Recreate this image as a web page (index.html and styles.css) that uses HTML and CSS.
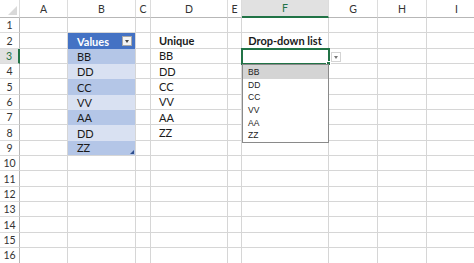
FILE: index.html
```html
<!DOCTYPE html>
<html>
<head>
<meta charset="utf-8">
<link rel="stylesheet" href="styles.css">
</head>
<body>
<div class="sheet">
  <div class="row hdr">
    <div class="c corner"><span class="tri"></span></div>
    <div class="c ch">A</div><div class="c ch">B</div><div class="c ch">C</div><div class="c ch">D</div><div class="c ch">E</div><div class="c ch sel">F</div><div class="c ch">G</div><div class="c ch">H</div><div class="c ch">I</div>
  </div>
  <div class="row"><div class="c rh">1</div><div class="c"></div><div class="c"></div><div class="c"></div><div class="c"></div><div class="c"></div><div class="c"></div><div class="c"></div><div class="c"></div><div class="c"></div></div>
  <div class="row"><div class="c rh">2</div><div class="c"></div><div class="c th">Values<span class="filter"><span class="ftri"></span></span></div><div class="c"></div><div class="c b">Unique</div><div class="c"></div><div class="c b center">Drop-down list</div><div class="c"></div><div class="c"></div><div class="c"></div></div>
  <div class="row"><div class="c rh rsel">3</div><div class="c"></div><div class="c dk">BB</div><div class="c"></div><div class="c">BB</div><div class="c"></div><div class="c active"><span class="handle"></span></div><div class="c"></div><div class="c"></div><div class="c"></div></div>
  <div class="row"><div class="c rh">4</div><div class="c"></div><div class="c lt">DD</div><div class="c"></div><div class="c">DD</div><div class="c"></div><div class="c"></div><div class="c"></div><div class="c"></div><div class="c"></div></div>
  <div class="row"><div class="c rh">5</div><div class="c"></div><div class="c dk">CC</div><div class="c"></div><div class="c">CC</div><div class="c"></div><div class="c"></div><div class="c"></div><div class="c"></div><div class="c"></div></div>
  <div class="row"><div class="c rh">6</div><div class="c"></div><div class="c lt">VV</div><div class="c"></div><div class="c">VV</div><div class="c"></div><div class="c"></div><div class="c"></div><div class="c"></div><div class="c"></div></div>
  <div class="row"><div class="c rh">7</div><div class="c"></div><div class="c dk">AA</div><div class="c"></div><div class="c">AA</div><div class="c"></div><div class="c"></div><div class="c"></div><div class="c"></div><div class="c"></div></div>
  <div class="row"><div class="c rh">8</div><div class="c"></div><div class="c lt">DD</div><div class="c"></div><div class="c">ZZ</div><div class="c"></div><div class="c"></div><div class="c"></div><div class="c"></div><div class="c"></div></div>
  <div class="row"><div class="c rh">9</div><div class="c"></div><div class="c dk last">ZZ<span class="resize"></span></div><div class="c"></div><div class="c"></div><div class="c"></div><div class="c"></div><div class="c"></div><div class="c"></div><div class="c"></div></div>
  <div class="row"><div class="c rh">10</div><div class="c"></div><div class="c"></div><div class="c"></div><div class="c"></div><div class="c"></div><div class="c"></div><div class="c"></div><div class="c"></div><div class="c"></div></div>
  <div class="row"><div class="c rh">11</div><div class="c"></div><div class="c"></div><div class="c"></div><div class="c"></div><div class="c"></div><div class="c"></div><div class="c"></div><div class="c"></div><div class="c"></div></div>
  <div class="row"><div class="c rh">12</div><div class="c"></div><div class="c"></div><div class="c"></div><div class="c"></div><div class="c"></div><div class="c"></div><div class="c"></div><div class="c"></div><div class="c"></div></div>
  <div class="row"><div class="c rh">13</div><div class="c"></div><div class="c"></div><div class="c"></div><div class="c"></div><div class="c"></div><div class="c"></div><div class="c"></div><div class="c"></div><div class="c"></div></div>
  <div class="row"><div class="c rh">14</div><div class="c"></div><div class="c"></div><div class="c"></div><div class="c"></div><div class="c"></div><div class="c"></div><div class="c"></div><div class="c"></div><div class="c"></div></div>
  <div class="row"><div class="c rh">15</div><div class="c"></div><div class="c"></div><div class="c"></div><div class="c"></div><div class="c"></div><div class="c"></div><div class="c"></div><div class="c"></div><div class="c"></div></div>
  <div class="row"><div class="c rh">16</div><div class="c"></div><div class="c"></div><div class="c"></div><div class="c"></div><div class="c"></div><div class="c"></div><div class="c"></div><div class="c"></div><div class="c"></div></div>

  <div class="dd-btn"><span class="dd-tri"></span></div>
  <ul class="dd-list">
    <li class="hl">BB</li>
    <li>DD</li>
    <li>CC</li>
    <li>VV</li>
    <li>AA</li>
    <li>ZZ</li>
  </ul>
</div>
</body>
</html>
```
FILE: styles.css
```css
html, body {
  margin: 0;
  padding: 0;
  background: #ffffff;
  overflow: hidden;
}
.sheet {
  position: relative;
  width: 474px;
  height: 263px;
  overflow: hidden;
  font-family: Lato, "Liberation Sans", sans-serif;
  font-size: 11px;
  color: #1a1a1a;
}
.row {
  display: grid;
  grid-template-columns: 20px 48px 68px 15px 77px 14px 87px 49px 49px 60px;
  height: 15.35px;
}
.row.hdr {
  height: 18px;
}
.c {
  box-sizing: border-box;
  border-right: 1px solid #d6d6d6;
  border-bottom: 1px solid #d6d6d6;
  padding-left: 8px;
  display: flex;
  align-items: center;
  white-space: nowrap;
  position: relative;
}
.hdr .c {
  border-bottom: 1px solid #b7b7b7;
  border-right: 1px solid #dcdcdc;
  justify-content: center;
  padding: 0;
  color: #333333;
  font-size: 10.5px;
  background: #ffffff;
}
.hdr .c.sel {
  background: #e1e1e1;
  border-bottom: 2px solid #217346;
  color: #217346;
}
.corner .tri {
  width: 0;
  height: 0;
  border-left: 9px solid transparent;
  border-bottom: 9px solid #d9d9d9;
  margin-left: 6px;
  margin-top: 4px;
}
.rh {
  justify-content: center;
  padding: 0;
  color: #333333;
  font-size: 10.5px;
  border-right: 1px solid #b7b7b7;
  border-bottom: 1px solid #dcdcdc;
}
.rh.rsel {
  background: #e1e1e1;
  color: #217346;
  border-right: 2px solid #217346;
}
.b {
  font-weight: 700;
}
.center {
  justify-content: center;
  padding-left: 0;
}
.th {
  background: #4472c4;
  color: #ffffff;
  font-weight: 700;
  border-bottom: none;
  padding-left: 9px;
}
.filter {
  position: absolute;
  right: 3px;
  top: 3px;
  width: 10px;
  height: 10px;
  box-sizing: border-box;
  background: #f4f4f4;
  border: 1px solid #a9a9a9;
  display: flex;
  align-items: center;
  justify-content: center;
}
.ftri, .dd-tri {
  width: 0;
  height: 0;
  border-left: 2.5px solid transparent;
  border-right: 2.5px solid transparent;
  border-top: 3px solid #444444;
}
.dk {
  background: #b4c6e7;
  border-bottom: none;
  padding-left: 9px;
}
.lt {
  background: #d9e1f2;
  border-bottom: none;
  padding-left: 9px;
}
.last {
  border-bottom: 1px solid #d6d6d6;
}
.resize {
  position: absolute;
  right: 1px;
  bottom: 1px;
  width: 0;
  height: 0;
  border-left: 4px solid transparent;
  border-bottom: 4px solid #2f4f8f;
}
.active {
  outline: 2px solid #217346;
  outline-offset: -1px;
  z-index: 2;
}
.handle {
  position: absolute;
  right: -3px;
  bottom: -3px;
  width: 5px;
  height: 5px;
  background: #217346;
  border: 1px solid #ffffff;
  box-sizing: border-box;
}
.dd-btn {
  position: absolute;
  left: 331px;
  top: 52px;
  width: 10px;
  height: 10px;
  box-sizing: border-box;
  border: 1px solid #d4d4d4;
  background: #ffffff;
  display: flex;
  align-items: center;
  justify-content: center;
}
.dd-btn .dd-tri {
  border-top-color: #777777;
}
.dd-list {
  position: absolute;
  left: 242px;
  top: 64px;
  width: 87px;
  height: 79px;
  box-sizing: border-box;
  margin: 0;
  padding: 0;
  list-style: none;
  background: #ffffff;
  border: 1px solid #8a8a8a;
  z-index: 3;
  font-family: "Liberation Sans", sans-serif;
  font-size: 8.5px;
  color: #222222;
}
.dd-list li {
  height: 12.7px;
  line-height: 12.7px;
  padding-left: 5px;
}
.dd-list li.hl {
  background: #d4d4d4;
  height: 13.5px;
  line-height: 14px;
}
```
